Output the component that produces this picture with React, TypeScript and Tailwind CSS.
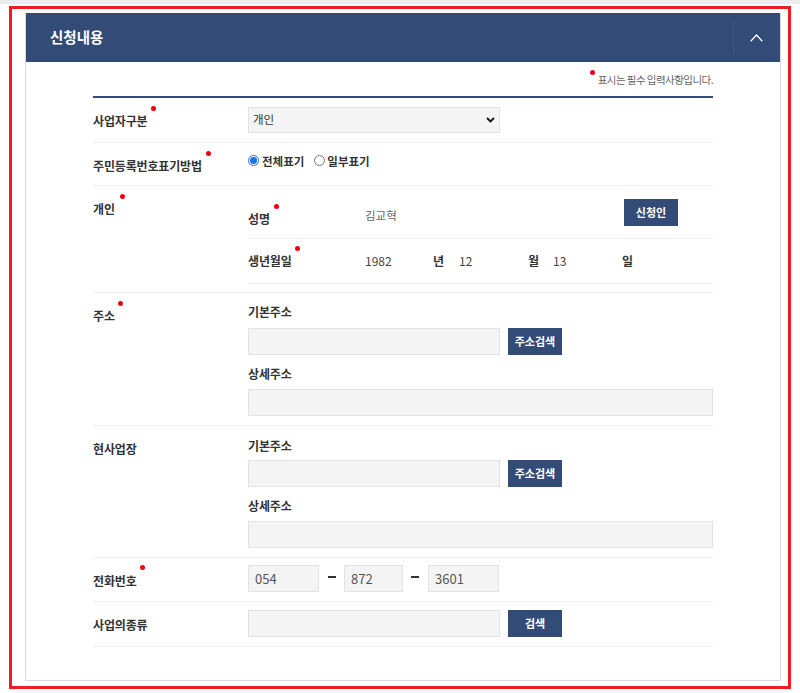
import React from "react";

const Dot = ({ className }: { className: string }) => (
  <span className={`absolute h-[5px] w-[5px] rounded-full bg-[#f5000f] ${className}`} />
);

const Label = ({ text, dot }: { text: string; dot?: string }) => (
  <span className="relative inline-block whitespace-nowrap text-[12px] font-bold leading-[18px] tracking-[-0.15px] text-[#333]">
    {text}
    {dot && <Dot className={dot} />}
  </span>
);

const Box = ({ className = "", value }: { className?: string; value?: string }) => (
  <div className={`h-[27px] border border-[#e2e2e2] bg-[#f4f4f4] pl-[6px] text-[13px] leading-[25px] text-[#555] ${className}`}>
    {value}
  </div>
);

const Btn = ({ text, className = "w-[54px]" }: { text: string; className?: string }) => (
  <div className={`flex h-[27px] items-center justify-center bg-[#334b77] text-[11px] font-bold text-white ${className}`}>
    {text}
  </div>
);

const Address = ({ top, gap }: { top: string; gap: string }) => (
  <div className={`flex flex-col ${top}`}>
    <Label text="기본주소" />
    <div className={`flex gap-[8px] ${gap}`}>
      <Box className="w-[252px]" />
      <Btn text="주소검색" />
    </div>
    <div className="mt-[10px] flex"><Label text="상세주소" /></div>
    <Box className="mt-[6px] w-[465px]" />
  </div>
);

export default function App() {
  return (
    <div className="h-[693px] w-[800px] overflow-hidden bg-white font-['Noto_Sans_CJK_KR','Noto_Sans',sans-serif]">
      <div className="h-[4px] bg-[#ececec]" />
      <div className="ml-[9px] mt-[2px] h-[683px] w-[782px] border-[3px] border-[#ee1c25] pl-[13px] pr-[7px] pt-[4px]">
        <div className="h-[668px] border border-t-0 border-[#d9d9d9]">
          <div className="flex h-[49px] items-center justify-between bg-[#334b77] pl-[24px]">
            <span className="mt-[-2px] text-[14.5px] font-bold text-white">신청내용</span>
            <div className="flex h-[33px] w-[47px] items-center justify-center border-l border-[#3f5680]">
              <svg width="13" height="8" viewBox="0 0 13 8" fill="none" stroke="white" strokeWidth="1.3" className="ml-[-2px]">
                <path d="M0.7 7.2 L6.5 1 L12.3 7.2" />
              </svg>
            </div>
          </div>

          <div className="ml-[67px] w-[620px]">
            <div className="flex h-[34px] items-center justify-end text-[10.5px] tracking-[-0.55px] text-[#666]">
              <span className="relative pt-[1px]">
                표시는 필수 입력사항입니다.
                <Dot className="-left-[8px] top-[-1px]" />
              </span>
            </div>
            <div className="h-[2px] bg-[#334b77]" />

            <div className="flex h-[45px] border-b border-[#eeeeee]">
              <div className="w-[155px] pt-[9px]"><Label text="사업자구분" dot="-right-[9px] -top-[6px]" /></div>
              <div className="pt-[9px]">
                <div className="flex h-[26px] w-[252px] items-center justify-between border border-[#e2e2e2] bg-[#f4f4f4] pl-[4px] pr-[4px] text-[11.5px] text-[#333]">
                  <span>개인</span>
                  <svg width="9" height="6" viewBox="0 0 9 6" fill="none" stroke="#111" strokeWidth="1.8"><path d="M1 1 L4.5 4.5 L8 1" /></svg>
                </div>
              </div>
            </div>

            <div className="flex h-[43px] border-b border-[#eeeeee]">
              <div className="w-[155px] pt-[9px]"><Label text="주민등록번호표기방법" dot="-right-[9px] -top-[6px]" /></div>
              <div className="flex items-start pt-[9px] text-[11.5px] font-bold text-[#333]">
                <div className="mt-[3px] flex h-[11px] w-[11px] items-center justify-center rounded-full border border-[#1b74e8]">
                  <div className="h-[7px] w-[7px] rounded-full bg-[#1b74e8]" />
                </div>
                <span className="ml-[3px] leading-[18px]">전체표기</span>
                <div className="ml-[10px] mt-[3px] h-[11px] w-[11px] rounded-full border border-[#767676]" />
                <span className="ml-[2px] leading-[18px]">일부표기</span>
              </div>
            </div>

            <div className="flex h-[107px] border-b border-[#eeeeee]">
              <div className="w-[155px] pt-[9px]"><Label text="개인" dot="-right-[10px] -top-[6px]" /></div>
              <div className="flex-1">
                <div className="flex h-[53px] items-center border-b border-[#eeeeee]">
                  <div className="w-[117px] pt-[9px]"><Label text="성명" dot="-right-[9px] -top-[6px]" /></div>
                  <span className="w-[259px] pt-[7px] text-[11.5px] text-[#666]">김교혁</span>
                  <Btn text="신청인" />
                </div>
                <div className="flex h-[45px] items-center border-b border-[#eeeeee] text-[12px] text-[#444]">
                  <div className="flex w-[117px]"><Label text="생년월일" dot="-right-[8px] -top-[6px]" /></div>
                  <span className="w-[68px]">1982</span>
                  <span className="w-[26px] font-bold text-[#333]">년</span>
                  <span className="w-[69px]">12</span>
                  <span className="w-[25px] font-bold text-[#333]">월</span>
                  <span className="w-[69px]">13</span>
                  <span className="font-bold text-[#333]">일</span>
                </div>
              </div>
            </div>

            <div className="flex h-[133px] border-b border-[#eeeeee]">
              <div className="w-[155px] pt-[9px]"><Label text="주소" dot="-right-[8px] -top-[6px]" /></div>
              <Address top="pt-[10px]" gap="mt-[7px]" />
            </div>

            <div className="flex h-[132px] border-b border-[#eeeeee]">
              <div className="w-[155px] pt-[9px]"><Label text="현사업장" /></div>
              <Address top="pt-[11px]" gap="mt-[5px]" />
            </div>

            <div className="flex h-[44px] border-b border-[#eeeeee]">
              <div className="w-[155px] pt-[9px]"><Label text="전화번호" dot="-right-[8px] -top-[7px]" /></div>
              <div className="flex items-start pt-[7px]">
                <Box className="w-[71px]" value="054" />
                <div className="ml-[9px] mr-[8px] mt-[11px] h-[2px] w-[8px] bg-[#333]" />
                <Box className="w-[59px]" value="872" />
                <div className="ml-[8px] mr-[9px] mt-[11px] h-[2px] w-[8px] bg-[#333]" />
                <Box className="w-[71px]" value="3601" />
              </div>
            </div>

            <div className="flex h-[45px] border-b border-[#eeeeee]">
              <div className="w-[155px] pt-[9px]"><Label text="사업의종류" /></div>
              <div className="flex gap-[8px] pt-[8px]">
                <Box className="w-[252px]" />
                <Btn text="검색" />
              </div>
            </div>
          </div>
        </div>
      </div>
    </div>
  );
}
